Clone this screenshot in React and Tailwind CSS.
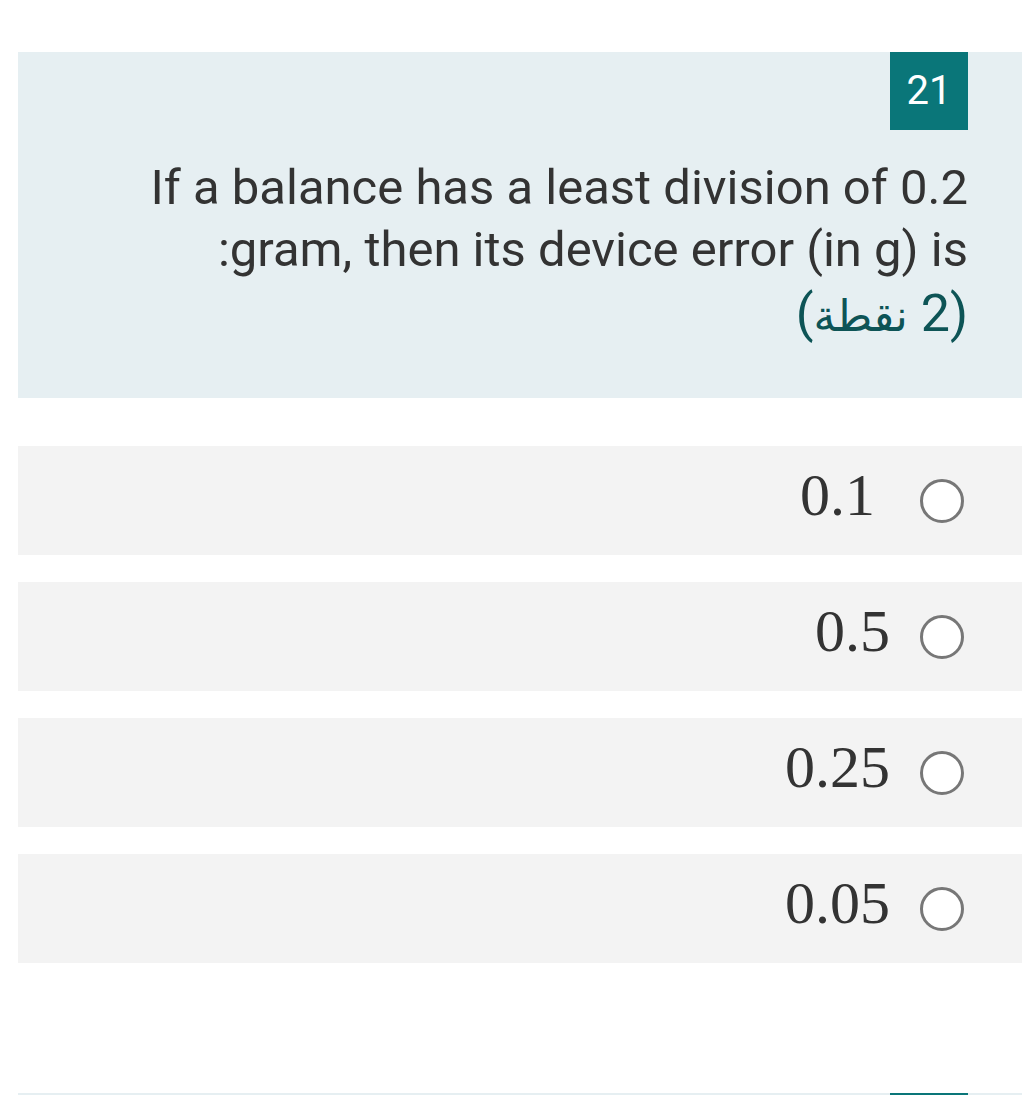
import React from "react";

const options = ["0.1\u00a0", "0.5", "0.25", "0.05"];

const Option = ({ label }) => (
  <div className="flex h-[109px] items-center justify-end gap-[30px] bg-[#f3f3f3] pr-[58px]">
    <span className="mb-[12px] font-['Liberation_Serif',serif] text-[60px] leading-none text-[#333333]">{label}</span>
    <span className="h-[44px] w-[44px] rounded-full border-[3px] border-[#777777] bg-white" />
  </div>
);

export default function App() {
  return (
    <div className="min-h-screen bg-white pt-[52px] font-['Roboto','DejaVu_Sans',sans-serif]">
      {/* Question card */}
      <div className="ml-[18px] w-[1004px] bg-[#e6eff2] pb-[49px] pr-[54px]">
        <div className="flex justify-end">
          <div className="flex h-[78px] w-[78px] items-center justify-center bg-[#0a7679] text-[40px] text-white">21</div>
        </div>
        <p className="mt-[27px] text-right text-[49px] leading-[62px] text-[#333333]">
          If a balance has a least division of 0.2
          <br />
          :gram, then its device error (in g) is
        </p>
        <p className="text-right text-[52px] leading-[65px] text-[#0d5456]">
          <span dir="rtl">
            (2 <span className="text-[44px]">نقطة</span>)
          </span>
        </p>
      </div>

      {/* Answers */}
      <div className="ml-[18px] mt-[48px] flex w-[1004px] flex-col gap-[27px]">
        {options.map((o) => (
          <Option key={o} label={o} />
        ))}
      </div>

      {/* Next question, cut off by the window */}
      <div className="ml-[18px] mt-[130px] h-[120px] w-[1004px] bg-[#e6eff2] pr-[54px]">
        <div className="flex justify-end">
          <div className="h-[78px] w-[78px] bg-[#0a7679]" />
        </div>
      </div>
    </div>
  );
}
